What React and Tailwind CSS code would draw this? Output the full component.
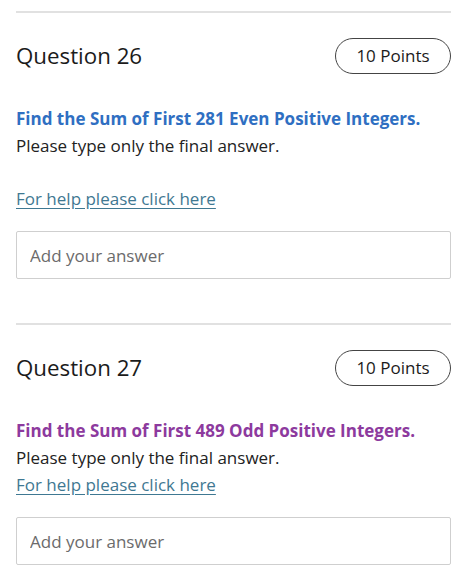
import React from 'react';

const questions = [
  {
    number: 26,
    points: 10,
    prompt: 'Find the Sum of First 281 Even Positive Integers.',
    color: 'text-[#2f6fc2]',
    linkGap: 'mt-[26px]',
  },
  {
    number: 27,
    points: 10,
    prompt: 'Find the Sum of First 489 Odd Positive Integers.',
    color: 'text-[#8d3a9e]',
    linkGap: 'mt-0',
  },
];

// Single question card
const Question = ({ q }) => (
  <section>
    <div className="h-[2px] bg-[#e1e1e1]" />
    <div className="mt-[25px] flex items-center justify-between">
      <h2 className="text-[22.3px] leading-[36px] text-[#1b1b1b]">Question {q.number}</h2>
      <span className="flex h-[36px] w-[116px] items-center justify-center rounded-full border-[1.5px] border-[#444] text-[17px] text-[#1b1b1b]">
        {q.points} Points
      </span>
    </div>
    <p className={`mt-[31px] text-[17px] font-bold leading-[27px] ${q.color}`}>{q.prompt}</p>
    <p className="text-[17px] leading-[27px] text-[#222]">Please type only the final answer.</p>
    <a href="#" className={`${q.linkGap} block w-fit text-[17px] leading-[27px] text-[#3f7892] underline underline-offset-[3px]`}>
      For help please click here
    </a>
    <input
      type="text"
      placeholder="Add your answer"
      className="mt-[19px] block h-[48px] w-full rounded-[2px] border border-[#cfcfcf] px-[13px] text-[17px] text-[#222] placeholder:text-[#6b6b6b] outline-none"
    />
  </section>
);

export default function App() {
  return (
    <div className="min-h-[577px] bg-white pt-[11px] pl-4 pr-[23px] font-['Open_Sans',sans-serif]">
      <Question q={questions[0]} />
      <div className="h-[44px]" />
      <Question q={questions[1]} />
    </div>
  );
}
